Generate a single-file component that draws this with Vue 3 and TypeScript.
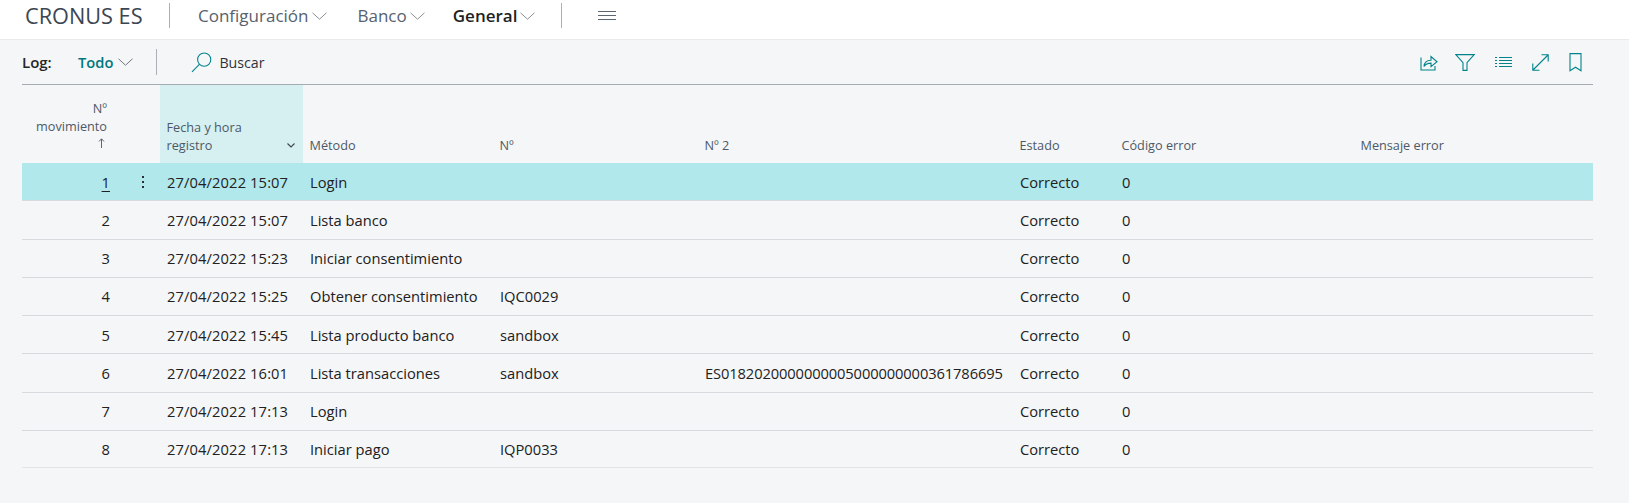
<script setup lang="ts">
interface Row { n: number; date: string; method: string; no: string; no2: string }
const rows: Row[] = [
  { n: 1, date: '27/04/2022 15:07', method: 'Login', no: '', no2: '' },
  { n: 2, date: '27/04/2022 15:07', method: 'Lista banco', no: '', no2: '' },
  { n: 3, date: '27/04/2022 15:23', method: 'Iniciar consentimiento', no: '', no2: '' },
  { n: 4, date: '27/04/2022 15:25', method: 'Obtener consentimiento', no: 'IQC0029', no2: '' },
  { n: 5, date: '27/04/2022 15:45', method: 'Lista producto banco', no: 'sandbox', no2: '' },
  { n: 6, date: '27/04/2022 16:01', method: 'Lista transacciones', no: 'sandbox', no2: 'ES0182020000000005000000000361786695' },
  { n: 7, date: '27/04/2022 17:13', method: 'Login', no: '', no2: '' },
  { n: 8, date: '27/04/2022 17:13', method: 'Iniciar pago', no: 'IQP0033', no2: '' },
]
const menus = [
  { label: 'Configuración', active: false },
  { label: 'Banco', active: false },
  { label: 'General', active: true },
]
</script>

<template>
  <div class="page">
    <header class="nav">
      <span class="company">CRONUS ES</span>
      <i class="sep"></i>
      <div class="menus">
        <span v-for="m in menus" :key="m.label" class="menu" :class="{ active: m.active }">
          {{ m.label }}
          <svg width="15" height="8" viewBox="0 0 15 8"><path d="M.5.8 7.5 7.2 14.5.8" fill="none" stroke="#8a8f96" /></svg>
        </span>
      </div>
      <i class="sep sep2"></i>
      <svg class="burger" width="18" height="10" viewBox="0 0 18 10"><path d="M0 .5h18M0 4.5h18M0 8.5h18" stroke="#5c6670" /></svg>
    </header>

    <main class="content">
      <div class="toolbar">
        <span class="log">Log:</span>
        <span class="todo">Todo</span>
        <svg class="todo-chev" width="15" height="8" viewBox="0 0 15 8"><path d="M.5.8 7.5 7.2 14.5.8" fill="none" stroke="#6f7780" /></svg>
        <i class="tsep"></i>
        <svg class="search" width="21" height="21" viewBox="0 0 21 21" fill="none" stroke="#00848a" stroke-width="1.1">
          <circle cx="13.2" cy="7.6" r="6.6" />
          <path d="M8.4 12.3 1 19.8" />
        </svg>
        <span class="buscar">Buscar</span>
        <div class="actions">
          <svg class="share" width="18" height="18" viewBox="0 0 18 18" fill="none" stroke="#00848a" stroke-width="1.1">
            <path d="M1 4.500v12.500h14v-4" />
            <path d="M4 13.500c.3-4 2.800-6.300 7-6.300V3.500l6 5.300-6 4.800v-3.500c-3.200 0-5.300.8-7 3.400Z" />
          </svg>
          <svg width="20" height="17" viewBox="0 0 20 17" fill="none" stroke="#00848a" stroke-width="1.1">
            <path d="M.8.6h18.400l-7.200 8v7.800H8V8.600Z" />
          </svg>
          <svg width="17" height="13" viewBox="0 0 17 13" fill="none" stroke="#00848a">
            <path d="M0 1.500h2M4 1.500h13M0 4.500h2M4 4.500h13M0 7.500h2M4 7.500h13M0 10.500h2M4 10.500h13" />
          </svg>
          <svg width="17" height="17" viewBox="0 0 17 17" fill="none" stroke="#00848a" stroke-width="1.1">
            <path d="M1 16 16 1M9.500.8h6.700v6.700M.8 9.500v6.700h6.700" />
          </svg>
          <svg width="13" height="19" viewBox="0 0 13 19" fill="none" stroke="#00848a" stroke-width="1.1">
            <path d="M1 .6h11v17.200l-5.500-3.600L1 17.800Z" />
          </svg>
        </div>
      </div>

      <div class="table">
        <div class="grid head">
          <div class="th right">
            <span>Nº</span><span>movimiento</span>
            <svg class="arrow" width="7" height="10" viewBox="0 0 7 10"><path d="M3.500 10V1M1 3.500 3.500 .8 6 3.500" fill="none" stroke="#5b6673" /></svg>
          </div>
          <div class="th"></div>
          <div class="th sorted">
            <span>Fecha y hora<br />registro</span>
            <svg class="sort" width="8" height="5" viewBox="0 0 8 5"><path d="M.5.500 4 4 7.500.5" fill="none" stroke="#3b4450" stroke-width="1.100" /></svg>
          </div>
          <div class="th">Método</div>
          <div class="th">Nº</div>
          <div class="th">Nº 2</div>
          <div class="th">Estado</div>
          <div class="th">Código error</div>
          <div class="th">Mensaje error</div>
        </div>

        <div v-for="r in rows" :key="r.n" class="grid row" :class="{ selected: r.n === 1, last: r.n === 8 }">
          <div class="td num"><span :class="{ link: r.n === 1 }">{{ r.n }}</span></div>
          <div class="td dots"><template v-if="r.n === 1"><b></b><b></b><b></b></template></div>
          <div class="td date">{{ r.date }}</div>
          <div class="td">{{ r.method }}</div>
          <div class="td">{{ r.no }}</div>
          <div class="td long">{{ r.no2 }}</div>
          <div class="td">Correcto</div>
          <div class="td">0</div>
          <div class="td"></div>
        </div>
      </div>
    </main>
  </div>
</template>

<style>
html, body { margin: 0; background: #f5f6f8; }
</style>

<style scoped>
.page {
  height: 503px;
  overflow: hidden;
  background: #f5f6f8;
  font-family: "Open Sans", "Liberation Sans", sans-serif;
  font-size: 14.7px;
  color: #212121;
}
.nav {
  box-sizing: border-box;
  background: #fff;
  border-bottom: 1px solid #e9eaec;
  display: flex;
  align-items: center;
  padding: 0 0 8px 25px;
  height: 40px;
}
.company { font-size: 21.700px; color: #3b4652; width: 144px; white-space: nowrap; }
.sep { width: 1px; height: 25px; background: #a9afb5; display: block; }
.menus { display: flex; margin-left: 28px; width: 363px; gap: 30px; }
.menu { font-size: 17px; color: #56616d; display: flex; align-items: center; gap: 3px; white-space: nowrap; }
.menu:nth-child(2) { margin-left: 1px; margin-right: -2px; }
.menu.active { color: #1f1f1f; font-weight: 600; }
.burger { margin-left: 36px; }
.content { padding: 0 36px 0 22px; }
.toolbar {
  height: 44px;
  display: flex;
  align-items: center;
  border-bottom: 1px solid #a4abb2;
}
.log { font-weight: 600; width: 56px; color: #262626; font-size: 15px; }
.todo { color: #00797e; font-weight: 600; font-size: 14.700px; }
.todo-chev { margin-left: 5px; }
.tsep { width: 1px; height: 26px; background: #aab0b6; margin-left: 23px; display: block; }
.search { margin-left: 34px; }
.buscar { margin-left: 7px; color: #2f3338; font-size: 14.200px; }
.actions { margin-left: auto; display: flex; align-items: center; gap: 20px; padding-right: 11px; }
.share { margin-right: -3px; }
.grid {
  display: grid;
  grid-template-columns: 105px 33px 143px 190px 205px 315px 102px 239px 239px;
}
.head { height: 78px; color: #4d5967; font-size: 12.700px; line-height: 18px; }
.th { padding: 0 7px 9px 6.500px; display: flex; align-items: flex-end; box-sizing: border-box; white-space: nowrap; }
.th.right { flex-direction: column; justify-content: flex-end; align-items: flex-end; padding-right: 20px; text-align: right; }
.th .arrow { margin: 3px 2px 6px 0; }
.th.sorted { background: #d6eff1; justify-content: space-between; padding-right: 8px; }
.sort { margin-bottom: 6px; }
.row { height: 38.250px; box-sizing: border-box; border-bottom: 1px solid #d6d9dd; align-items: center; }
.row.last { height: 37px; border-bottom-color: #e2e4e7; }
.row.selected { background: #b1e8ec; }
.td { padding-left: 7px; white-space: nowrap; }
.td.num { padding: 0 17px 0 0; text-align: right; }
.td.date { letter-spacing: .12px; }
.td.long { letter-spacing: -.11px; }
.link { text-decoration: underline; text-underline-offset: 3px; }
.dots { padding: 0; display: flex; flex-direction: column; align-items: center; gap: 3px; margin-left: -1px; }
.dots b { width: 2px; height: 2px; background: #2b2f33; display: block; }
</style>
